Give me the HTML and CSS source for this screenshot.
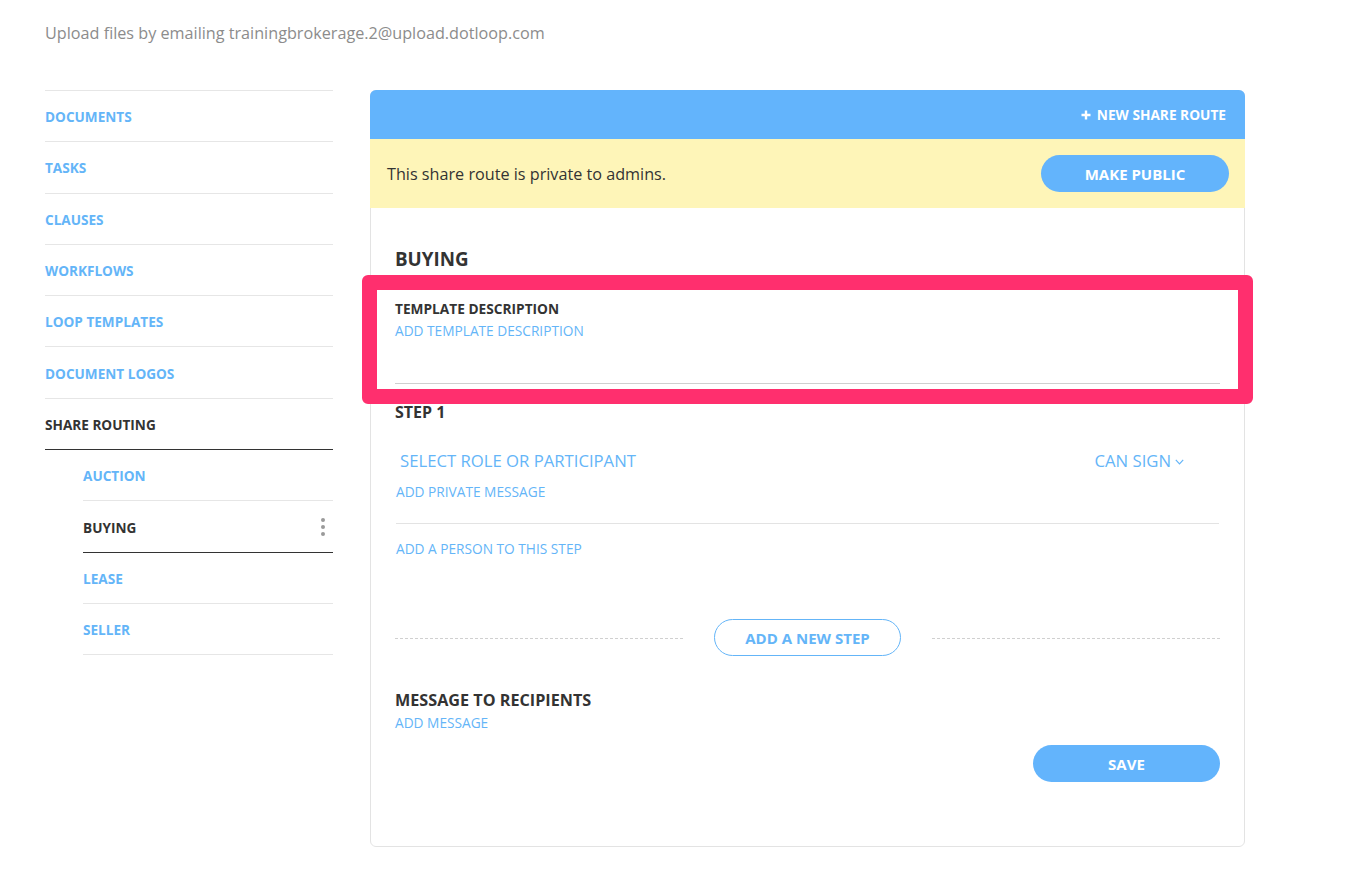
FILE: index.html
```html
<!DOCTYPE html>
<html>
<head>
<meta charset="utf-8">
<link rel="stylesheet" href="styles.css">
</head>
<body>
<div class="page">
  <div class="upload">Upload files by emailing trainingbrokerage.2@upload.dotloop.com</div>
  <div class="main">
    <nav class="sidebar">
      <ul class="nav">
        <li class="nav-item">DOCUMENTS</li>
        <li class="nav-item">TASKS</li>
        <li class="nav-item">CLAUSES</li>
        <li class="nav-item">WORKFLOWS</li>
        <li class="nav-item">LOOP TEMPLATES</li>
        <li class="nav-item">DOCUMENT LOGOS</li>
        <li class="nav-item active">SHARE ROUTING</li>
      </ul>
      <ul class="subnav">
        <li class="nav-item">AUCTION</li>
        <li class="nav-item active">BUYING
          <span class="kebab"><i></i><i></i><i></i></span>
        </li>
        <li class="nav-item">LEASE</li>
        <li class="nav-item">SELLER</li>
      </ul>
    </nav>

    <section class="card">
      <div class="card-head">
        <span class="new-route">
          <svg class="plus" width="10" height="10" viewBox="0 0 10 10"><path d="M5 0.5v9M0.5 5h9" stroke="#fff" stroke-width="2.4"/></svg>
          NEW SHARE ROUTE
        </span>
      </div>
      <div class="notice">
        <span class="notice-text">This share route is private to admins.</span>
        <button class="pill pill-solid make-public">MAKE PUBLIC</button>
      </div>
      <div class="card-body">
        <h2 class="route-title">BUYING</h2>
        <div class="template-desc">
          <div class="label">TEMPLATE DESCRIPTION</div>
          <div class="link">ADD TEMPLATE DESCRIPTION</div>
          <div class="highlight"></div>
        </div>

        <h3 class="step-title">STEP 1</h3>
        <div class="step-person">
          <div class="person-row">
            <span class="role">SELECT ROLE OR PARTICIPANT</span>
            <span class="perm">CAN SIGN
              <svg width="9" height="6" viewBox="0 0 9 6"><path d="M0.8 0.8 L4.5 4.8 L8.2 0.8" fill="none" stroke="#64b5f8" stroke-width="1.2"/></svg>
            </span>
          </div>
          <div class="link private">ADD PRIVATE MESSAGE</div>
        </div>
        <div class="link add-person">ADD A PERSON TO THIS STEP</div>

        <div class="new-step-row">
          <span class="dots"></span>
          <button class="pill pill-outline">ADD A NEW STEP</button>
          <span class="dots"></span>
        </div>

        <div class="label message-title">MESSAGE TO RECIPIENTS</div>
        <div class="link">ADD MESSAGE</div>

        <div class="actions">
          <button class="pill pill-solid save">SAVE</button>
        </div>
      </div>
    </section>
  </div>
</div>
</body>
</html>
```

FILE: styles.css
```css
* { box-sizing: border-box; }
html, body { margin: 0; padding: 0; background: #fff; }
body {
  font-family: "Open Sans", "Noto Sans", "Liberation Sans", sans-serif;
  color: #333;
}
.page { padding: 23px 0 0 45px; }
.upload {
  font-size: 16.2px;
  line-height: 21px;
  color: #8c8c8c;
}
.main {
  display: flex;
  align-items: flex-start;
  gap: 37px;
  margin-top: 46px;
}

/* sidebar */
.sidebar { width: 288px; }
.nav, .subnav { list-style: none; margin: 0; padding: 0; }
.nav { border-top: 1px solid #e6e6e6; }
.subnav { margin-left: 38px; }
.nav-item {
  position: relative;
  display: flex;
  align-items: center;
  height: 51.3px;
  padding-top: 1px;
  border-bottom: 1px solid #e6e6e6;
  font-size: 13.6px;
  font-weight: 700;
  color: #64b5f8;
}
.nav-item.active { color: #333; border-bottom-color: #333; }
.kebab {
  position: absolute;
  right: 8px;
  top: 17px;
  display: flex;
  flex-direction: column;
  gap: 3px;
}
.kebab i {
  display: block;
  width: 4px;
  height: 4px;
  border-radius: 50%;
  background: #9a9a9a;
}

/* card */
.card {
  width: 875px;
  border: 1px solid #e3e3e3;
  border-radius: 6px;
}
.card-head {
  height: 49px;
  margin: -1px -1px 0;
  border-radius: 6px 6px 0 0;
  background: #63b4fc;
  display: flex;
  align-items: center;
  justify-content: flex-end;
  padding-right: 19px;
}
.new-route {
  display: flex;
  align-items: center;
  gap: 6px;
  color: #fff;
  font-size: 13.7px;
  font-weight: 700;
}
.notice {
  height: 69px;
  margin: 0 -1px;
  background: #fef5b8;
  display: flex;
  align-items: center;
  justify-content: space-between;
  padding: 0 16px 0 17px;
}
.notice-text { font-size: 16.2px; color: #333; }
.pill {
  font-family: inherit;
  border-radius: 999px;
  font-size: 15px;
  font-weight: 700;
  cursor: pointer;
  padding: 0;
}
.pill-solid {
  background: #63b4fc;
  color: #fff;
  border: none;
}
.make-public { width: 188px; height: 37px; }
.pill-outline {
  width: 187px;
  height: 37px;
  background: #fff;
  color: #64b5f8;
  border: 1px solid #64b5f8;
}

.card-body { padding: 39px 24px 64px; }
.route-title {
  margin: 0;
  font-size: 18.8px;
  line-height: 24px;
  font-weight: 700;
  color: #333;
}
.label {
  font-size: 13.7px;
  line-height: 18px;
  font-weight: 700;
  color: #333;
}
.link {
  font-size: 13.7px;
  line-height: 18px;
  color: #64b5f8;
  margin-top: 4px;
}
.template-desc {
  position: relative;
  margin-top: 29px;
  padding-bottom: 43px;
  border-bottom: 1px solid #cfcfcf;
}
.highlight {
  position: absolute;
  left: -33px;
  right: -33px;
  top: -25px;
  bottom: -21px;
  border: 15px solid #ff2f6e;
  border-radius: 6px;
  pointer-events: none;
}
.step-title {
  margin: 17px 0 0;
  font-size: 16px;
  line-height: 22px;
  font-weight: 700;
  color: #333;
}
.step-person {
  margin-top: 27px;
  padding-bottom: 22px;
  border-bottom: 1px solid #e3e3e3;
  margin-left: 1px;
  margin-right: 1px;
}
.person-row {
  display: flex;
  justify-content: space-between;
  align-items: center;
  padding: 0 35px 0 4px;
}
.role, .perm {
  font-size: 16.7px;
  line-height: 22px;
  color: #64b5f8;
}
.perm { display: flex; align-items: center; gap: 4px; }
.perm svg { margin-top: 1px; }
.link.private { margin-top: 11px; }
.link.add-person { margin-top: 16px; margin-left: 1px; }
.new-step-row {
  display: flex;
  align-items: center;
  gap: 31px;
  margin-top: 61px;
}
.dots {
  flex: 1;
  border-top: 1px dashed #d0d0d0;
  height: 0;
  margin-top: 1px;
}
.message-title {
  margin-top: 34px;
  font-size: 16.2px;
  line-height: 20px;
}
.actions {
  display: flex;
  justify-content: flex-end;
  margin-top: 13px;
}
.save { width: 187px; height: 37px; }
```
